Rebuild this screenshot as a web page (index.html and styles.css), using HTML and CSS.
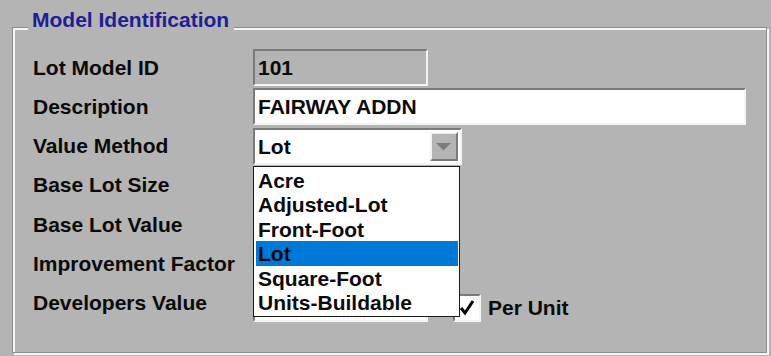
FILE: index.html
```html
<!DOCTYPE html>
<html>
<head>
<meta charset="utf-8">
<link rel="stylesheet" href="styles.css">
</head>
<body>
<div class="group">
  <div class="legend">Model Identification</div>
  <div class="form">
    <div class="label">Lot Model ID</div>
    <div class="field ro w175">101</div>

    <div class="label">Description</div>
    <div class="field w493">FAIRWAY ADDN</div>

    <div class="label">Value Method</div>
    <div class="combo-wrap">
      <div class="field combo">
        <span class="combo-text">Lot</span>
        <span class="combo-btn">
          <svg width="15" height="8" viewBox="0 0 15 8"><polygon points="0,0 15,0 7.5,7.5" fill="#7c7c7c"/></svg>
        </span>
      </div>
      <div class="list">
        <div class="item">Acre</div>
        <div class="item">Adjusted-Lot</div>
        <div class="item">Front-Foot</div>
        <div class="item sel">Lot</div>
        <div class="item">Square-Foot</div>
        <div class="item">Units-Buildable</div>
      </div>
    </div>

    <div class="label">Base Lot Size</div>
    <div class="field w175"></div>

    <div class="label">Base Lot Value</div>
    <div class="field w175"></div>

    <div class="label">Improvement Factor</div>
    <div class="field w175"></div>

    <div class="label">Developers Value</div>
    <div class="devrow">
      <div class="field w175"></div>
      <div class="check">
        <svg width="22" height="22" viewBox="0 0 22 22"><polyline points="5,11 9,16 17,4" fill="none" stroke="#000" stroke-width="3"/></svg>
      </div>
      <span class="check-label">Per Unit</span>
    </div>
  </div>
</div>
</body>
</html>
```

FILE: styles.css
```css
html, body {
  margin: 0;
  padding: 0;
  background: #b4b4b4;
}
body {
  font-family: "Liberation Sans", Arial, sans-serif;
  font-weight: bold;
  font-size: 21px;
  color: #0a0a0a;
  width: 771px;
  height: 356px;
  overflow: hidden;
}
.group {
  margin: 27px 0 0 12px;
  width: 753px;
  height: 324px;
  border: 1px solid #8e8e8e;
  box-shadow: inset 2px 2px 0 #f6f6f6, 2px 2px 0 #f6f6f6;
}
.legend {
  width: max-content;
  margin: -20px 0 0 15px;
  padding: 0 5px 0 4px;
  background: #b4b4b4;
  color: #1e1e96;
  line-height: 24px;
}
.form {
  margin-top: 17px;
  padding-left: 20px;
  display: grid;
  grid-template-columns: 220px auto;
  grid-auto-rows: 37px;
  row-gap: 2.33px;
  align-items: center;
  justify-items: start;
}
.label {
  line-height: 24px;
}
.field {
  box-sizing: border-box;
  height: 37px;
  border: 2px solid;
  border-color: #7a7a7a #f4f4f4 #f4f4f4 #7a7a7a;
  background: #fff;
  padding-left: 3px;
  line-height: 33px;
  white-space: nowrap;
}
.ro { background: #b4b4b4; }
.w175 { width: 175px; }
.w493 { width: 493px; }
.combo-wrap {
  position: relative;
}
.combo {
  width: 209px;
  display: flex;
  align-items: center;
}
.combo-text { flex: 1; }
.combo-btn {
  box-sizing: border-box;
  width: 28px;
  height: 29px;
  margin-right: 2px;
  border: 2px solid;
  border-color: #f2f2f2 #7a7a7a #7a7a7a #f2f2f2;
  background: #b4b4b4;
  display: flex;
  align-items: center;
  justify-content: center;
}
.combo-btn svg { margin-top: 1px; margin-left: -2px; }
.list {
  position: absolute;
  left: 0;
  top: 38px;
  width: 207px;
  box-sizing: border-box;
  border: 1px solid #1a1a1a;
  background: #fff;
  padding: 1px 1px 1px 2px;
  z-index: 5;
}
.item {
  height: 24.5px;
  line-height: 25.5px;
  padding-left: 2px;
}
.item.sel { background: #0078d7; }
.devrow {
  display: flex;
  align-items: center;
}
.check {
  box-sizing: border-box;
  width: 28px;
  height: 28px;
  margin: 10px 0 0 25px;
  border: 2px solid;
  border-color: #7a7a7a #f4f4f4 #f4f4f4 #7a7a7a;
  background: #fff;
  display: flex;
  align-items: center;
  justify-content: center;
}
.check-label {
  margin: 10px 0 0 7px;
  line-height: 24px;
}
```
